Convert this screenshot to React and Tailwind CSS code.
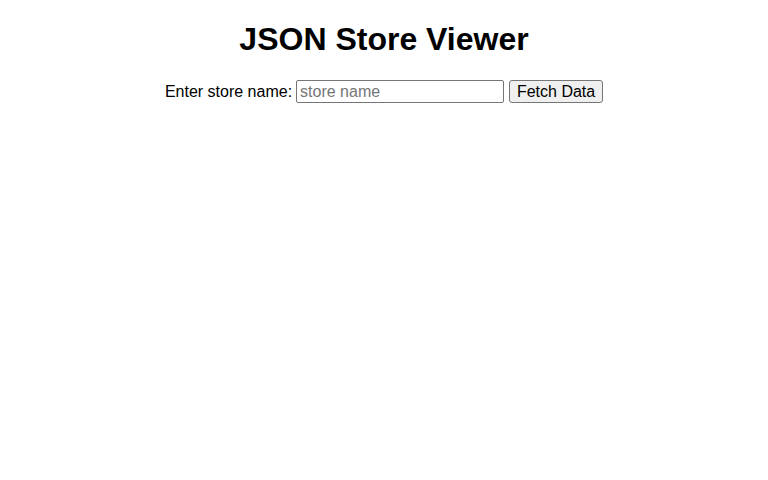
import { useState } from 'react';

const App = () => {
  const [store, setStore] = useState('');

  return (
    <div className="min-h-screen bg-white text-black text-center font-['Liberation_Sans',Arial,sans-serif] text-base">
      <h1 className="text-[32px] font-bold pt-[21px] pb-[22px] leading-[37px]">JSON Store Viewer</h1>
      <div className="flex items-center justify-center">
        <label htmlFor="store" className="mr-[4px] leading-[23px]">Enter store name:</label>
        <input
          id="store"
          value={store}
          onChange={(e) => setStore(e.target.value)}
          placeholder="store name"
          className="w-[208px] h-[23px] px-[3px] border border-[#767676] rounded-[2px] text-base placeholder:text-[#757575] outline-none"
        />
        <button className="ml-[5px] h-[23px] w-[94px] border border-[#767676] rounded-[3px] bg-[#efefef] text-base leading-none">
          Fetch Data
        </button>
      </div>
    </div>
  );
};

export default App;
